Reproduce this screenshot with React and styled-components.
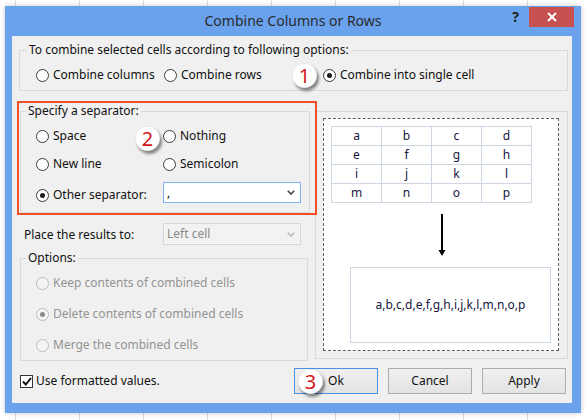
import React from "react";
import styled, { createGlobalStyle } from "styled-components";

const GlobalStyle = createGlobalStyle`
  html, body { margin: 0; padding: 0; }
  body {
    background: #ffffff;
    font-family: "Noto Sans", "Open Sans", "DejaVu Sans", sans-serif;
    font-size: 12px;
    color: #111;
  }
  * { box-sizing: border-box; }
`;

const Desktop = styled.div`
  width: 586px;
  height: 420px;
  overflow: hidden;
  padding: 6px 0 0 5px;
  background-color: #fff;
  background-image: repeating-linear-gradient(
    to right,
    transparent 0 15px,
    #dcdcdc 15px 16px,
    transparent 16px 64px
  );
`;

const Window = styled.div`
  width: 576px;
  height: 407px;
  background: #6aa2ee;
  display: flex;
  flex-direction: column;
  box-shadow: 0 0 5px rgba(0, 0, 0, 0.22);
`;

const TitleBar = styled.div`
  height: 30px;
  flex: none;
  display: grid;
  grid-template-columns: 1fr auto 1fr;
  align-items: center;
`;

const Title = styled.div`
  grid-column: 2;
  font-size: 14px;
  line-height: 30px;
  color: #2b2b2b;
`;

const Controls = styled.div`
  grid-column: 3;
  justify-self: end;
  align-self: start;
  display: flex;
  align-items: flex-start;
  gap: 10px;
  padding: 1px 7px 0 0;
`;

const HelpMark = styled.span`
  font-weight: 700;
  font-size: 14px;
  line-height: 20px;
  color: #222;
`;

const CloseButton = styled.div`
  width: 45px;
  height: 20px;
  background: #c75050;
  display: flex;
  align-items: center;
  justify-content: center;
`;

const Client = styled.div`
  flex: 1;
  margin: 0 9px 10px 7px;
  background: #f0f0f0;
  padding: 6px 4px 0 7px;
  display: flex;
  flex-direction: column;
`;

const Group = styled.fieldset`
  margin: ${(p) => p.$margin || "0"};
  min-width: 0;
  border: 1px solid #dadada;
  padding: ${(p) => p.$pad};
`;

const Legend = styled.legend`
  margin-left: ${(p) => p.$indent}px;
  padding: 0 2px;
  font-size: 12px;
  line-height: 16px;
  color: #111;
`;

const ModeRow = styled.div`
  display: grid;
  grid-template-columns: 128px 159px auto;
  padding-left: 16px;
`;

const Option = styled.label`
  position: relative;
  display: flex;
  align-items: center;
  gap: 4px;
  height: 16px;
  line-height: 16px;
  white-space: nowrap;
  color: ${(p) => (p.$disabled ? "#939393" : "#111")};
`;

const RadioMark = styled.span`
  flex: none;
  width: 13px;
  height: 13px;
  border-radius: 50%;
  border: 1px solid ${(p) => (p.$disabled ? "#bdbdbd" : "#3b3b3b")};
  background: ${(p) => (p.$disabled ? "#f4f4f4" : "#fff")};
  display: flex;
  align-items: center;
  justify-content: center;
  &::after {
    content: "";
    display: ${(p) => (p.$checked ? "block" : "none")};
    width: 5px;
    height: 5px;
    border-radius: 50%;
    background: ${(p) => (p.$disabled ? "#8a8a8a" : "#1b1b1b")};
  }
`;

const Middle = styled.div`
  display: flex;
  align-items: flex-start;
  gap: 5px;
  margin-top: 12px;
  padding-left: 1px;
`;

const LeftColumn = styled.div`
  width: 290px;
  flex: none;
  display: flex;
  flex-direction: column;
`;

const SeparatorArea = styled.div`
  position: relative;
`;

const Highlight = styled.div`
  position: absolute;
  top: -2px;
  left: -3px;
  right: -7px;
  bottom: -2px;
  border: 2px solid #f24f24;
  pointer-events: none;
`;

const SeparatorGrid = styled.div`
  display: grid;
  grid-template-columns: 127px 138px;
  grid-template-rows: 16px 28px 31px;
  align-items: end;
  padding-left: 15px;
`;

const Dropdown = styled.div`
  width: 138px;
  height: ${(p) => p.$h}px;
  border: 1px solid ${(p) => (p.$disabled ? "#d6d6d6" : "#7eb4ea")};
  background: ${(p) => (p.$disabled ? "#f2f2f2" : "#fff")};
  color: ${(p) => (p.$disabled ? "#8a8a8a" : "#111")};
  display: flex;
  align-items: center;
  justify-content: space-between;
  padding: 0 5px 0 3px;
  line-height: 16px;
`;

const PlaceRow = styled.div`
  display: grid;
  grid-template-columns: 139px 138px;
  align-items: center;
  margin-top: 10px;
  padding-left: 4px;
  height: 22px;
`;

const OptionStack = styled.div`
  display: flex;
  flex-direction: column;
  gap: 15px;
  padding-left: 15px;
`;

const PreviewPanel = styled.div`
  width: 253px;
  height: 248px;
  flex: none;
  margin-top: 8px;
  border: 1px solid #dadada;
  padding: 6px 8px 7px 7px;
  display: flex;
`;

const Canvas = styled.div`
  flex: 1;
  border: 1px dashed #5e5e5e;
  background: #fff;
  padding: 7px;
  display: flex;
  flex-direction: column;
`;

const LetterTable = styled.table`
  border-collapse: collapse;
  table-layout: fixed;
  width: 201px;
  height: 77px;
`;

const Cell = styled.td`
  border: 1px solid #cdd7e4;
  padding: 0;
  text-align: center;
  font-size: 12px;
  line-height: 16px;
  color: #15153a;
`;

const Arrow = styled.svg`
  align-self: center;
  margin: 11px 0 0 2px;
  flex: none;
`;

const ResultBox = styled.div`
  align-self: flex-end;
  margin-top: 11px;
  width: 201px;
  height: 77px;
  border: 1px solid #cdd7e4;
  display: flex;
  align-items: center;
  justify-content: center;
  color: #15153a;
  font-size: 12px;
`;

const BottomBar = styled.div`
  display: flex;
  align-items: center;
  height: 26px;
  margin-top: 7px;
  padding: 0 2px 0 1px;
`;

const CheckOption = styled.label`
  flex: 1;
  display: flex;
  align-items: center;
  gap: 3px;
  line-height: 16px;
`;

const CheckBox = styled.span`
  width: 13px;
  height: 13px;
  border: 1px solid #333;
  background: #fff;
  display: flex;
  align-items: center;
  justify-content: center;
`;

const ButtonRow = styled.div`
  display: flex;
  gap: 10px;
`;

const Button = styled.div`
  position: relative;
  width: 84px;
  height: 26px;
  border: 1px solid ${(p) => (p.$default ? "#4a90e2" : "#acacac")};
  background: linear-gradient(#efefef, #e3e3e3);
  display: flex;
  align-items: center;
  justify-content: center;
  line-height: 16px;
  color: #111;
`;

const Badge = styled.span`
  position: absolute;
  left: ${(p) => p.$x}px;
  top: ${(p) => p.$y}px;
  z-index: 2;
  width: 25px;
  height: 25px;
  border-radius: 50%;
  background: #fff;
  box-shadow: 2px 3px 3px rgba(0, 0, 0, 0.45), inset 0 0 0 1px rgba(0, 0, 0, 0.08);
  color: #d3161c;
  font-size: 20px;
  line-height: 25px;
  text-align: center;
`;

const Chevron = ({ disabled }) => (
  <svg width="8" height="5" viewBox="0 0 8 5">
    <polyline
      points="0.8,0.8 4,4 7.2,0.8"
      fill="none"
      stroke={disabled ? "#b8b8b8" : "#444"}
      strokeWidth="1.6"
    />
  </svg>
);

const Radio = ({ label, checked, disabled, children }) => (
  <Option $disabled={disabled}>
    {children}
    <RadioMark $checked={checked} $disabled={disabled} />
    {label}
  </Option>
);

const letters = [
  ["a", "b", "c", "d"],
  ["e", "f", "g", "h"],
  ["i", "j", "k", "l"],
  ["m", "n", "o", "p"],
];

export default function App() {
  return (
    <>
      <GlobalStyle />
      <Desktop>
        <Window>
          <TitleBar>
            <Title>Combine Columns or Rows</Title>
            <Controls>
              <HelpMark>?</HelpMark>
              <CloseButton>
                <svg width="10" height="10" viewBox="0 0 10 10">
                  <path d="M1 1 L9 9 M9 1 L1 9" stroke="#fff" strokeWidth="2" />
                </svg>
              </CloseButton>
            </Controls>
          </TitleBar>

          <Client>
            <Group $pad="9px 0 7px 0">
              <Legend $indent={7}>
                To combine selected cells according to following options:
              </Legend>
              <ModeRow>
                <Radio label="Combine columns" />
                <Radio label="Combine rows" />
                <Radio label="Combine into single cell" checked>
                  <Badge $x={-31} $y={-4}>1</Badge>
                </Radio>
              </ModeRow>
            </Group>

            <Middle>
              <LeftColumn>
                <SeparatorArea>
                  <Group $pad="9px 8px 9px 0">
                    <Legend $indent={5}>Specify a separator:</Legend>
                    <SeparatorGrid>
                      <Radio label="Space" />
                      <Radio label="Nothing">
                        <Badge $x={-28} $y={-2}>2</Badge>
                      </Radio>
                      <Radio label="New line" />
                      <Radio label="Semicolon" />
                      <Radio label="Other separator:" checked />
                      <Dropdown $h={21}>
                        <span>,</span>
                        <Chevron />
                      </Dropdown>
                    </SeparatorGrid>
                  </Group>
                  <Highlight />
                </SeparatorArea>

                <PlaceRow>
                  <span>Place the results to:</span>
                  <Dropdown $h={22} $disabled>
                    <span>Left cell</span>
                    <Chevron disabled />
                  </Dropdown>
                </PlaceRow>

                <Group $pad="9px 2px 7px 0" $margin="5px 2px 0 0">
                  <Legend $indent={5}>Options:</Legend>
                  <OptionStack>
                    <Radio label="Keep contents of combined cells" disabled />
                    <Radio label="Delete contents of combined cells" checked disabled />
                    <Radio label="Merge the combined cells" disabled />
                  </OptionStack>
                </Group>
              </LeftColumn>

              <PreviewPanel>
                <Canvas>
                  <LetterTable>
                    <tbody>
                      {letters.map((row, i) => (
                        <tr key={i}>
                          {row.map((ch) => (
                            <Cell key={ch}>{ch}</Cell>
                          ))}
                        </tr>
                      ))}
                    </tbody>
                  </LetterTable>
                  <Arrow width="10" height="42" viewBox="0 0 10 42">
                    <line x1="5" y1="0" x2="5" y2="38" stroke="#000" strokeWidth="2" />
                    <polygon points="1.5,36 8.5,36 5,42" fill="#000" />
                  </Arrow>
                  <ResultBox>a,b,c,d,e,f,g,h,i,j,k,l,m,n,o,p</ResultBox>
                </Canvas>
              </PreviewPanel>
            </Middle>

            <BottomBar>
              <CheckOption>
                <CheckBox>
                  <svg width="10" height="9" viewBox="0 0 10 9">
                    <polyline
                      points="1,4.5 3.8,7.5 9,1"
                      fill="none"
                      stroke="#111"
                      strokeWidth="2"
                    />
                  </svg>
                </CheckBox>
                Use formatted values.
              </CheckOption>
              <ButtonRow>
                <Button $default>
                  <Badge $x={3} $y={0}>3</Badge>
                  Ok
                </Button>
                <Button>Cancel</Button>
                <Button>Apply</Button>
              </ButtonRow>
            </BottomBar>
          </Client>
        </Window>
      </Desktop>
    </>
  );
}
